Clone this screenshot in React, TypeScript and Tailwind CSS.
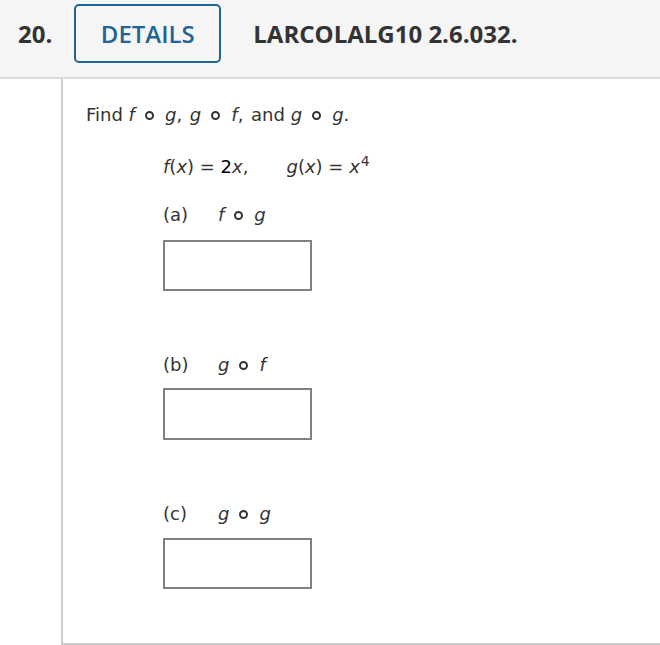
function Ring() {
  return <span className="inline-block ml-[10px] mr-[11px] w-[9px] h-[9px] rounded-full border-2 border-[#333] align-[1px]" />
}

function Comp({ a, b, className = '' }: { a: string; b: string; className?: string }) {
  return (
    <span className={className}>
      <i>{a}</i>
      <Ring />
      <i>{b}</i>
    </span>
  )
}

function AnswerBox({ h = 'h-[51px]' }: { h?: string }) {
  return <div className={`w-[149px] ${h} border-2 border-[#808080] bg-white`} />
}

function Part({ label, a, b }: { label: string; a: string; b: string }) {
  return (
    <div className="ml-[77px] flex items-baseline h-[22px] leading-[22px]">
      <span className="w-[55px]">({label})</span>
      <Comp a={a} b={b} />
    </div>
  )
}

export default function App() {
  return (
    <div className="w-[660px] h-[645px] bg-white text-[#333] overflow-hidden">
      <div className="flex items-start pt-[4px] h-[79px] bg-[#f5f5f5] border-b-2 border-[#dddddd] font-[family-name:Open_Sans,sans-serif] text-[24px] leading-[59px]">
        <span className="ml-[18px] font-bold text-[#333]">20.</span>
        <div className="ml-[22px] w-[147px] h-[59px] flex items-center justify-center border-2 border-[#1d6596] rounded-[5px] text-[#1d6596] font-semibold">
          DETAILS
        </div>
        <span className="ml-[32px] font-bold text-[#333]">LARCOLALG10 2.6.032.</span>
      </div>
      <div
        className="ml-[61px] h-[566px] border-l-2 border-b-2 border-[#cccccc] pl-[23px] pt-[25px] text-[18px] leading-[22px]"
        style={{ fontFamily: '"DejaVu Sans"' }}
      >
        <div className="h-[22px]">
          Find <Comp a="f" b="g" />, <Comp className="ml-[2px]" a="g" b="f" />,{' '}
          <span className="ml-[2px]">and</span> <Comp a="g" b="g" />.
        </div>
        <div className="mt-[30px] ml-[77px] h-[22px] whitespace-pre">
          <i>f</i>(<i>x</i>) = <span className="text-black">2</span><i>x</i>,
          <span className="inline-block w-[38px]" />
          <i>g</i>(<i>x</i>) = <i>x</i>
          <sup className="ml-[1px] text-[14px]">4</sup>
        </div>
        <div className="mt-[26px]">
          <Part label="a" a="f" b="g" />
        </div>
        <div className="mt-[14px] ml-[77px]">
          <AnswerBox />
        </div>
        <div className="mt-[63px]">
          <Part label="b" a="g" b="f" />
        </div>
        <div className="mt-[12px] ml-[77px]">
          <AnswerBox h="h-[52px]" />
        </div>
        <div className="mt-[63px]">
          <Part label="c" a="g" b="g" />
        </div>
        <div className="mt-[13px] ml-[77px]">
          <AnswerBox />
        </div>
      </div>
    </div>
  )
}
